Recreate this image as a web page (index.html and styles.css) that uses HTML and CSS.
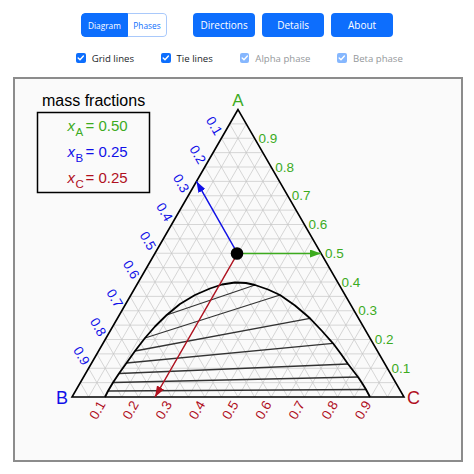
FILE: index.html
```html
<!DOCTYPE html>
<html>
<head>
<meta charset="utf-8">
<link rel="stylesheet" href="styles.css">
</head>
<body>
<div class="page">
  <div class="btnrow">
    <div class="group">
      <span class="seg seg-on">Diagram</span>
      <span class="seg seg-off">Phases</span>
    </div>
    <div class="btns">
      <span class="btn">Directions</span>
      <span class="btn">Details</span>
      <span class="btn">About</span>
    </div>
  </div>
  <div class="checks">
    <label class="chk"><span class="box"><svg viewBox="0 0 10 10"><path d="M2.3 5.2 4.2 7 7.8 3.2" fill="none" stroke="#fff" stroke-width="1.5" stroke-linecap="round" stroke-linejoin="round"/></svg></span>Grid lines</label>
    <label class="chk"><span class="box"><svg viewBox="0 0 10 10"><path d="M2.3 5.2 4.2 7 7.8 3.2" fill="none" stroke="#fff" stroke-width="1.5" stroke-linecap="round" stroke-linejoin="round"/></svg></span>Tie lines</label>
    <label class="chk off"><span class="box"><svg viewBox="0 0 10 10"><path d="M2.3 5.2 4.2 7 7.8 3.2" fill="none" stroke="#fff" stroke-width="1.5" stroke-linecap="round" stroke-linejoin="round"/></svg></span>Alpha phase</label>
    <label class="chk off"><span class="box"><svg viewBox="0 0 10 10"><path d="M2.3 5.2 4.2 7 7.8 3.2" fill="none" stroke="#fff" stroke-width="1.5" stroke-linecap="round" stroke-linejoin="round"/></svg></span>Beta phase</label>
  </div>
  <div class="panel">
    <svg class="plot" width="446" height="381" viewBox="15 79 446 381">
      <defs>
        <marker id="hb" markerUnits="userSpaceOnUse" markerWidth="11" markerHeight="8" refX="11" refY="4" orient="auto"><path d="M0 0L11 4L0 8z" fill="#1010e8"/></marker>
        <marker id="hg" markerUnits="userSpaceOnUse" markerWidth="11" markerHeight="8" refX="11" refY="4" orient="auto"><path d="M0 0L11 4L0 8z" fill="#3cab1e"/></marker>
        <marker id="hr" markerUnits="userSpaceOnUse" markerWidth="11" markerHeight="8" refX="11" refY="4" orient="auto"><path d="M0 0L11 4L0 8z" fill="#b0101e"/></marker>
      </defs>
      <text class="title" x="42" y="106">mass fractions</text>
      <rect class="legend" x="37.5" y="112.5" width="112" height="80"/>
      <g class="leg green">
        <text class="it" x="67.5" y="131">x</text>
        <text class="sub" x="75.5" y="136">A</text>
        <text x="85.5" y="131">= 0.50</text>
      </g>
      <g class="leg blue">
        <text class="it" x="67.5" y="157">x</text>
        <text class="sub" x="75.5" y="162">B</text>
        <text x="85.5" y="157">= 0.25</text>
      </g>
      <g class="leg red">
        <text class="it" x="67.5" y="182.5">x</text>
        <text class="sub" x="75.5" y="187.5">C</text>
        <text x="85.5" y="182.5">= 0.25</text>
      </g>

      <path class="grid" d="M80.3 382.625H395.7M88.6 368.25H387.4M96.9 353.875H379.1M105.2 339.5H370.8M113.5 325.125H362.5M121.8 310.75H354.2M130.1 296.375H345.9M138.4 282H337.6M146.7 267.625H329.3M155 253.25H321M163.3 238.875H312.7M171.6 224.5H304.4M179.9 210.125H296.1M188.2 195.75H287.8M196.5 181.375H279.5M204.8 167H271.2M213.1 152.625H262.9M221.4 138.25H254.6M229.7 123.875H246.3
      M80.3 382.625l8.3 14.375M88.6 368.25l16.6 28.75M96.9 353.875l24.9 43.125M105.2 339.5l33.2 57.5M113.5 325.125l41.5 71.875M121.8 310.75l49.8 86.25M130.1 296.375l58.1 100.625M138.4 282l66.4 115M146.7 267.625l74.7 129.375M155 253.25l83 143.75M163.3 238.875l91.3 158.125M171.6 224.5l99.6 172.5M179.9 210.125l107.9 186.875M188.2 195.75l116.2 201.25M196.5 181.375l124.5 215.625M204.8 167l132.8 230M213.1 152.625l141.1 244.375M221.4 138.25l149.4 258.75M229.7 123.875l157.7 273.125
      M395.7 382.625l-8.3 14.375M387.4 368.25l-16.6 28.75M379.1 353.875l-24.9 43.125M370.8 339.5l-33.2 57.5M362.5 325.125l-41.5 71.875M354.2 310.75l-49.8 86.25M345.9 296.375l-58.1 100.625M337.6 282l-66.4 115M329.3 267.625l-74.7 129.375M321 253.25l-83 143.75M312.7 238.875l-91.3 158.125M304.4 224.5l-99.6 172.5M296.1 210.125l-107.9 186.875M287.8 195.75l-116.2 201.25M279.5 181.375l-124.5 215.625M271.2 167l-132.8 230M262.9 152.625l-141.1 244.375M254.6 138.25l-149.4 258.75M246.3 123.875l-157.7 273.125"/>

      <path class="tie" d="M166.7 315L255 285M145 338L280 295M135 351L310 318.3M126.5 363L333 343.3M119 373.5L348 364M113 382.5L358 377M108 391L366 389.5"/>
      <polyline class="curve" points="105,397 108,391 113,382.5 119,373.5 126.5,363 135,351 145,338 155,326.5 166.7,315 180,304 195,295 210,288.5 222,284.5 235,282.5 246,283 255,285 268,289.5 280,295 295,305.5 310,318.3 322,331 333,343.3 341,354 348,364 353,370.5 358,377 362,383 366,389.5 370,397"/>

      <polygon class="tri" points="238,109.5 72,397 404,397"/>

      <text class="vlab green" x="238" y="106" text-anchor="middle">A</text>
      <text class="vlab2 blue" x="68" y="404" text-anchor="end">B</text>
      <text class="vlab2 red" x="407" y="404">C</text>

      <g class="tick green">
        <text x="391.4" y="368.25">0.1</text>
        <text x="374.8" y="339.5">0.2</text>
        <text x="358.2" y="310.75">0.3</text>
        <text x="341.6" y="282">0.4</text>
        <text x="325" y="253.25">0.5</text>
        <text x="308.4" y="224.5">0.6</text>
        <text x="291.8" y="195.75">0.7</text>
        <text x="275.2" y="167">0.8</text>
        <text x="258.6" y="138.25">0.9</text>
      </g>
      <g class="tick blue" text-anchor="end">
        <text transform="translate(218.9 133.95) rotate(60)">0.1</text>
        <text transform="translate(202.3 162.7) rotate(60)">0.2</text>
        <text transform="translate(185.7 191.45) rotate(60)">0.3</text>
        <text transform="translate(169.1 220.2) rotate(60)">0.4</text>
        <text transform="translate(152.5 248.95) rotate(60)">0.5</text>
        <text transform="translate(135.9 277.7) rotate(60)">0.6</text>
        <text transform="translate(119.3 306.45) rotate(60)">0.7</text>
        <text transform="translate(102.7 335.2) rotate(60)">0.8</text>
        <text transform="translate(86.1 363.95) rotate(60)">0.9</text>
      </g>
      <g class="tick red" text-anchor="end">
        <text transform="translate(102.2 402) rotate(-60)">0.1</text>
        <text transform="translate(135.4 402) rotate(-60)">0.2</text>
        <text transform="translate(168.6 402) rotate(-60)">0.3</text>
        <text transform="translate(201.8 402) rotate(-60)">0.4</text>
        <text transform="translate(235 402) rotate(-60)">0.5</text>
        <text transform="translate(268.2 402) rotate(-60)">0.6</text>
        <text transform="translate(301.4 402) rotate(-60)">0.7</text>
        <text transform="translate(334.6 402) rotate(-60)">0.8</text>
        <text transform="translate(367.8 402) rotate(-60)">0.9</text>
      </g>

      <line class="arr ab" x1="237.5" y1="253.5" x2="196.5" y2="181.4" marker-end="url(#hb)"/>
      <line class="arr ag" x1="237.5" y1="253.5" x2="321" y2="253.5" marker-end="url(#hg)"/>
      <line class="arr ar" x1="237.5" y1="253.5" x2="155" y2="397" marker-end="url(#hr)"/>
      <circle cx="237" cy="253.5" r="6.3" fill="#000"/>
    </svg>
  </div>
</div>
</body>
</html>
```

FILE: styles.css
```css
html, body {
  margin: 0;
  padding: 0;
  background: #fff;
}
.page {
  width: 474px;
  height: 474px;
  font-family: "Open Sans", "Noto Sans", sans-serif;
  color: #212529;
}
.btnrow {
  display: flex;
  justify-content: center;
  align-items: center;
  gap: 26px;
  padding: 13px 0 0 0;
  height: 24px;
}
.group {
  display: flex;
  height: 24px;
  border-radius: 4px;
  overflow: hidden;
}
.seg {
  display: flex;
  align-items: center;
  justify-content: center;
  padding: 0 6px;
  font-size: 8.3px;
  box-sizing: border-box;
}
.seg-on {
  background: #0d6efd;
  color: #fff;
  border: 1px solid #0d6efd;
  border-radius: 4px 0 0 4px;
}
.seg-off {
  background: #fff;
  color: #0d6efd;
  border: 1px solid #a9c9fb;
  border-left: none;
  border-radius: 0 4px 4px 0;
  padding: 0 5.5px;
}
.btns {
  display: flex;
  gap: 7px;
}
.btn {
  display: flex;
  align-items: center;
  justify-content: center;
  width: 62px;
  height: 24px;
  background: #0d6efd;
  color: #fff;
  border-radius: 4px;
  font-size: 10px;
}
.checks {
  display: flex;
  justify-content: center;
  align-items: center;
  gap: 27px;
  margin-top: 13px;
  height: 16px;
  padding-left: 5px;
  font-size: 9.6px;
}
.chk {
  display: flex;
  align-items: center;
  gap: 6px;
}
.box {
  width: 9.5px;
  height: 9.5px;
  border-radius: 2px;
  background: #0d6efd;
  display: flex;
}
.box svg {
  width: 9.5px;
  height: 9.5px;
}
.chk.off {
  color: #95989b;
}
.chk.off .box {
  background: #86b7fe;
}
.panel {
  margin: 11px 0 0 13px;
  width: 450px;
  height: 385px;
  box-sizing: border-box;
  border: 2px solid #8c8c8c;
  background: #fafafa;
}
.plot {
  display: block;
  font-family: "Liberation Sans", Arial, sans-serif;
}
.title {
  font-size: 16px;
  fill: #000;
}
.legend {
  fill: none;
  stroke: #000;
  stroke-width: 1.5;
}
.leg text {
  font-size: 15px;
}
.leg .it {
  font-style: italic;
}
.leg .sub {
  font-size: 11.5px;
}
.green { fill: #3cab1e; }
.blue { fill: #1010e8; }
.red { fill: #b0101e; }
.grid {
  fill: none;
  stroke: #c6c6c6;
  stroke-width: 0.7;
}
.tie {
  fill: none;
  stroke: #333;
  stroke-width: 1.3;
}
.curve {
  fill: none;
  stroke: #000;
  stroke-width: 1.8;
  stroke-linejoin: round;
}
.tri {
  fill: none;
  stroke: #000;
  stroke-width: 1.6;
  stroke-linejoin: miter;
}
.vlab {
  font-size: 17px;
}
.vlab2 {
  font-size: 18px;
}
.tick text {
  font-size: 13.5px;
  dominant-baseline: central;
}
.arr {
  stroke-width: 1.5;
}
.ab { stroke: #1010e8; }
.ag { stroke: #3cab1e; }
.ar { stroke: #b0101e; }
```
